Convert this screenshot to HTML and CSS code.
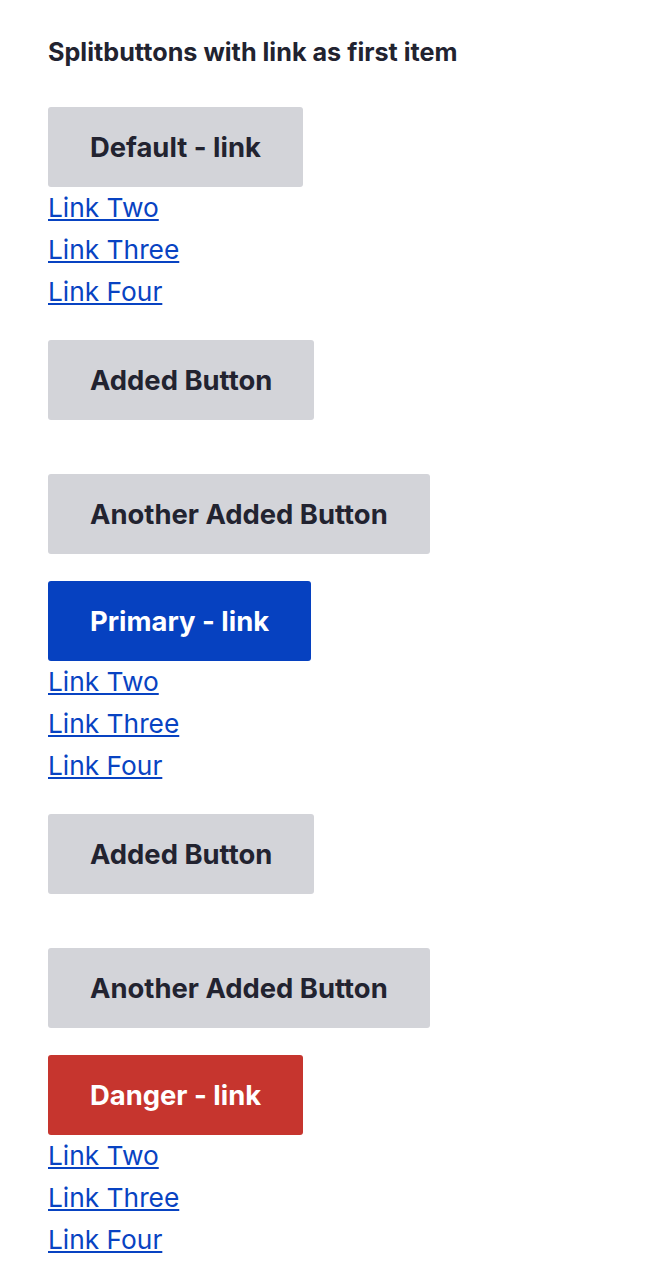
FILE: index.html
```html
<!DOCTYPE html>
<html lang="en">
<head>
    <meta charset="UTF-8">
    <meta name="viewport" content="width=device-width, initial-scale=1.0">
    <title>Splitbuttons</title>
    <link rel="stylesheet" href="styles.css">
</head>
<body>
    <main class="page">
        <h2 class="section-title">Splitbuttons with link as first item</h2>

        <div class="splitbutton">
            <a href="#" class="button">Default - link</a>
            <ul class="splitbutton-list">
                <li><a href="#">Link Two</a></li>
                <li><a href="#">Link Three</a></li>
                <li><a href="#">Link Four</a></li>
            </ul>
            <button class="button added">Added Button</button>
            <button class="button added another">Another Added Button</button>
        </div>

        <div class="splitbutton">
            <a href="#" class="button button-primary">Primary - link</a>
            <ul class="splitbutton-list">
                <li><a href="#">Link Two</a></li>
                <li><a href="#">Link Three</a></li>
                <li><a href="#">Link Four</a></li>
            </ul>
            <button class="button added">Added Button</button>
            <button class="button added another">Another Added Button</button>
        </div>

        <div class="splitbutton">
            <a href="#" class="button button-danger">Danger - link</a>
            <ul class="splitbutton-list">
                <li><a href="#">Link Two</a></li>
                <li><a href="#">Link Three</a></li>
                <li><a href="#">Link Four</a></li>
            </ul>
        </div>
    </main>
</body>
</html>
```

FILE: styles.css
```css
body {
    margin: 0;
    padding: 0;
    font-family: Inter, "Noto Sans", sans-serif;
    color: #222330;
    background-color: #fff;
}

.page {
    padding: 36px 48px 0;
}

.section-title {
    margin: 0 0 39px;
    font-size: 25.2px;
    line-height: 32px;
    font-weight: 700;
}

.splitbutton {
    display: flex;
    flex-direction: column;
    align-items: flex-start;
    margin-bottom: 27px;
}

.button {
    display: inline-block;
    box-sizing: border-box;
    height: 80px;
    padding: 25px 41px;
    border: 1px solid transparent;
    border-radius: 3px;
    background-color: #d3d4d9;
    color: #222330;
    font-family: inherit;
    font-size: 27.4px;
    line-height: 28px;
    font-weight: 700;
    text-decoration: none;
    cursor: pointer;
}

.button-primary {
    background-color: #0641c0;
    color: #fff;
}

.button-danger {
    background-color: #c6352e;
    color: #fff;
}

.splitbutton-list {
    list-style: none;
    margin: 0;
    padding: 0;
}

.splitbutton-list li {
    font-size: 26.3px;
    line-height: 42px;
}

.splitbutton-list a {
    color: #0843c2;
}

.added {
    margin-top: 27px;
}

.another {
    margin-top: 54px;
}
```
